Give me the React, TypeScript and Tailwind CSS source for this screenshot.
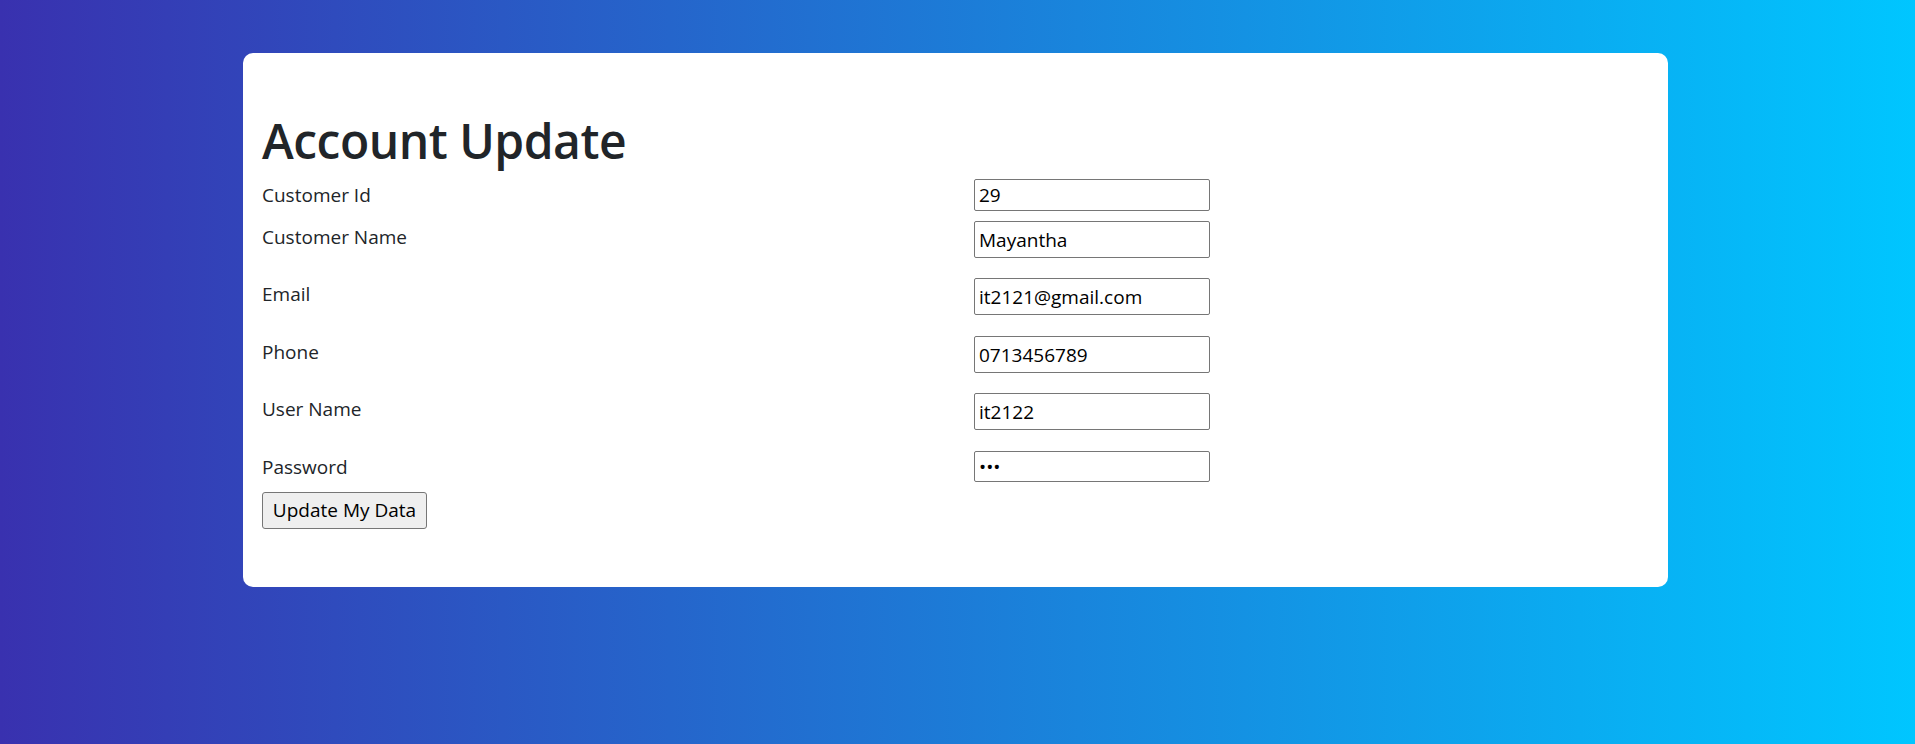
import React from "react";

const rows: { label: string; value: string; type: string; h: string; ih: string }[] = [
  { label: "Customer Id", value: "29", type: "text", h: "h-[42px]", ih: "h-[32px]" },
  { label: "Customer Name", value: "Mayantha", type: "text", h: "h-[57px]", ih: "h-[37px]" },
  { label: "Email", value: "it2121@gmail.com", type: "text", h: "h-[58px]", ih: "h-[37px]" },
  { label: "Phone", value: "0713456789", type: "text", h: "h-[57px]", ih: "h-[37px]" },
  { label: "User Name", value: "it2122", type: "text", h: "h-[58px]", ih: "h-[37px]" },
  { label: "Password", value: "123", type: "password", h: "h-[41px]", ih: "h-[31px]" },
];

export default function App() {
  return (
    <div
      className="w-full h-[744px] bg-[linear-gradient(to_right,#3931af,#00c6ff)] pt-[53px] text-[#212529]"
      style={{ fontFamily: '"Open Sans", "Noto Sans", sans-serif' }}
    >
      <div className="ml-[243px] w-[1425px] h-[534px] bg-white rounded-[10px] pl-[19px] pt-[58px]">
        <h1 className="text-[48px] leading-[60px] font-semibold tracking-[-0.5px] mb-[8px]">Account Update</h1>
        <div className="flex flex-col">
          {rows.map((r) => (
            <div key={r.label} className={`flex items-start ${r.h}`}>
              <label className="w-[712px] text-[19px] leading-[30px] pt-[1px]">{r.label}</label>
              <input
                type={r.type}
                defaultValue={r.value}
                readOnly
                className={`w-[236px] ${r.ih} border border-[#767676] rounded-[2px] px-[4px] text-[19px] text-black outline-none`}
              />
            </div>
          ))}
        </div>
        <button className="w-[165px] h-[37px] bg-[#efefef] border border-[#767676] rounded-[3px] text-[19px] text-black leading-none">
          Update My Data
        </button>
      </div>
    </div>
  );
}
